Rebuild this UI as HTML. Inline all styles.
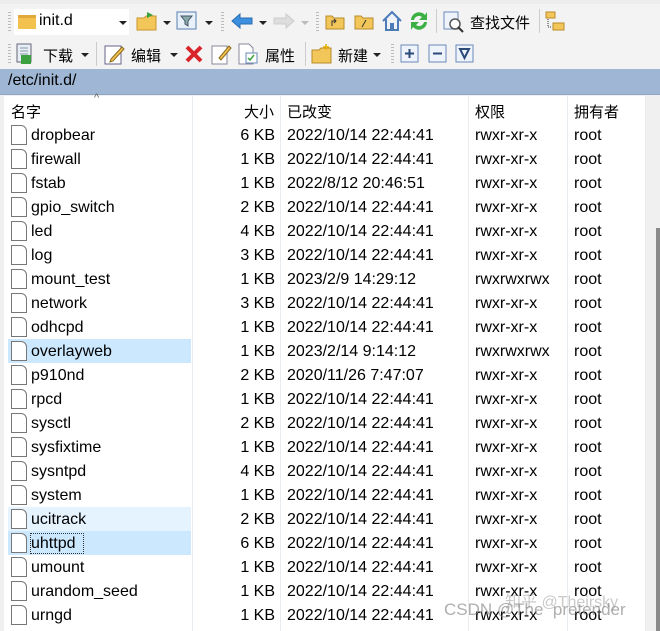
<!DOCTYPE html>
<html><head><meta charset="utf-8"><style>
*{margin:0;padding:0;box-sizing:border-box}
body{width:660px;height:631px;overflow:hidden;background:#f0f0f0;font-family:"Liberation Sans","Noto Sans CJK SC",sans-serif;font-size:15px;color:#000;position:relative}
.a{position:absolute}
.tb{position:absolute;left:0;width:660px;background:#f5f5f5}
.grip{position:absolute;width:3px;height:20px;background:repeating-linear-gradient(#bbb 0 1px,transparent 1px 3px)}
.sep{position:absolute;width:1px;height:24px;background:#ccc}
.dd{position:absolute;width:0;height:0;border-left:4px solid transparent;border-right:4px solid transparent;border-top:4px solid #222}
.t{position:absolute;font-size:15px;white-space:nowrap}
.row{position:absolute;left:0;height:24px;width:646px;font-size:16px}
.row span{position:absolute;top:4px;line-height:18px;white-space:nowrap}
.fi{position:absolute;left:11px;top:2px;width:16px;height:20px;border:1px solid #777;background:#fff;border-top-right-radius:6px}
</style></head><body>
<!-- toolbar 1 -->
<div class="tb" style="top:0;height:38px;background:#f3f3f3;border-top:4px solid #ededed"></div>
<div class="grip" style="left:8px;top:12px"></div>
<div class="a" style="left:14px;top:9px;width:115px;height:26px;background:#fff"></div>
<div class="a" style="left:18px;top:15px;width:18px;height:14px;background:#f2c14e;border-top:3px solid #e0a93a"></div>
<div class="t" style="left:39px;top:12px;font-size:16px">init.d</div>
<div class="dd" style="left:119px;top:21px"></div>
<svg class="a" style="left:135px;top:10px" width="24" height="22"><path d="M2 8h7l2-2h10v14H2z" fill="#f3c65a" stroke="#c9962f"/><path d="M12 2l6 3-6 3z" fill="#3aa040"/></svg>
<div class="dd" style="left:163px;top:21px"></div>
<svg class="a" style="left:176px;top:11px" width="22" height="20"><rect x="1" y="1" width="19" height="17" fill="#e8f0fa" stroke="#5a7fb0"/><path d="M5 5h11l-4 5v5l-3-2v-3z" fill="#8aa" stroke="#456"/></svg>
<div class="dd" style="left:205px;top:21px"></div>
<div class="grip" style="left:221px;top:12px"></div>
<svg class="a" style="left:231px;top:13px" width="22" height="16"><path d="M1 8l8-7v4h12v6H9v4z" fill="#3d8fe0" stroke="#2a6cb0"/></svg>
<div class="dd" style="left:259px;top:21px"></div>
<svg class="a" style="left:273px;top:13px" width="22" height="16"><path d="M21 8l-8-7v4H1v6h12v4z" fill="#ddd" stroke="#ccc"/></svg>
<div class="dd" style="left:301px;top:21px;border-top-color:#bbb"></div>
<div class="grip" style="left:316px;top:12px"></div>
<svg class="a" style="left:325px;top:12px" width="20" height="18"><path d="M1 4h6l2 2h10v11H1z" fill="#f3c65a" stroke="#b98b2a"/><path d="M7 14v-5h4M9 7l2 2-2 2" stroke="#333" fill="none"/></svg>
<svg class="a" style="left:354px;top:12px" width="20" height="18"><path d="M1 4h6l2 2h10v11H1z" fill="#f3c65a" stroke="#b98b2a"/><path d="M8 15l4-7" stroke="#333"/></svg>
<svg class="a" style="left:381px;top:10px" width="22" height="22"><path d="M2 11L11 2l9 9M5 9v11h12V9" fill="#eef3fb" stroke="#4c7bb8" stroke-width="2"/><rect x="9" y="13" width="4" height="7" fill="#4c7bb8"/></svg>
<svg class="a" style="left:407px;top:9px" width="24" height="24"><path d="M4 11a8 8 0 0 1 14-5l2-3v8h-8l3-3a5 5 0 0 0-8 3z" fill="#3cb043"/><path d="M20 13a8 8 0 0 1-14 5l-2 3v-8h8l-3 3a5 5 0 0 0 8-3z" fill="#3cb043"/></svg>
<div class="sep" style="left:436px;top:9px"></div>
<svg class="a" style="left:443px;top:11px" width="22" height="22"><rect x="1" y="1" width="14" height="17" fill="#eef3fb" stroke="#6a8ab8"/><circle cx="12" cy="13" r="5" fill="#fff" stroke="#555" stroke-width="1.5"/><path d="M15 16l5 5" stroke="#333" stroke-width="2"/></svg>
<div class="t" style="left:470px;top:12px">查找文件</div>
<div class="sep" style="left:539px;top:9px"></div>
<svg class="a" style="left:545px;top:11px" width="22" height="22"><rect x="1" y="1" width="9" height="6" fill="#f3c65a" stroke="#b98b2a"/><rect x="8" y="12" width="11" height="7" fill="#f3c65a" stroke="#b98b2a"/><path d="M3 8v8h4" stroke="#333" stroke-dasharray="1 1" fill="none"/></svg>
<!-- toolbar 2 -->
<div class="tb" style="top:38px;height:32px;background:#f3f3f3"></div>
<div class="grip" style="left:8px;top:44px"></div>
<svg class="a" style="left:15px;top:42px" width="22" height="24"><rect x="2" y="2" width="14" height="18" fill="#e8eef6" stroke="#667"/><path d="M5 6h8M5 9h8M5 12h8" stroke="#89a"/><rect x="6" y="13" width="10" height="9" fill="#3aa040"/></svg>
<div class="t" style="left:43px;top:45px">下载</div>
<div class="dd" style="left:81px;top:53px"></div>
<div class="sep" style="left:96px;top:42px"></div>
<svg class="a" style="left:104px;top:43px" width="22" height="22"><rect x="1" y="3" width="16" height="18" fill="#fff" stroke="#668"/><path d="M7 16l11-12 2 2L9 18l-3 1z" fill="#f2c14e" stroke="#8a6a20"/></svg>
<div class="t" style="left:131px;top:45px">编辑</div>
<div class="dd" style="left:170px;top:53px"></div>
<svg class="a" style="left:184px;top:44px" width="20" height="20"><path d="M3 3l14 14M17 3L3 17" stroke="#d9242a" stroke-width="4"/></svg>
<svg class="a" style="left:211px;top:43px" width="22" height="22"><rect x="1" y="3" width="15" height="18" fill="#fff" stroke="#889"/><path d="M8 15l10-12 2 2L10 17z" fill="#f2c14e" stroke="#8a6a20"/></svg>
<svg class="a" style="left:238px;top:43px" width="22" height="22"><path d="M1 1h10l4 4v16H1z" fill="#fff" stroke="#889"/><rect x="8" y="10" width="11" height="10" fill="#fff" stroke="#6a8ab8"/><path d="M10 15l2 2 4-5" stroke="#3aa040" stroke-width="1.5" fill="none"/></svg>
<div class="t" style="left:265px;top:45px">属性</div>
<div class="sep" style="left:305px;top:42px"></div>
<svg class="a" style="left:311px;top:43px" width="22" height="22"><path d="M1 7h7l2-2h10v15H1z" fill="#f3c65a" stroke="#b98b2a"/><path d="M15 1v6M12 4h6" stroke="#e8b000" stroke-width="1.5"/></svg>
<div class="t" style="left:338px;top:45px">新建</div>
<div class="dd" style="left:373px;top:53px"></div>
<div class="grip" style="left:391px;top:44px"></div>
<svg class="a" style="left:400px;top:44px" width="20" height="20"><rect x="1" y="1" width="17" height="17" fill="#eef3fb" stroke="#6a8ab8"/><path d="M9.5 5v9M5 9.5h9" stroke="#2a4a7a" stroke-width="2"/></svg>
<svg class="a" style="left:428px;top:44px" width="20" height="20"><rect x="1" y="1" width="17" height="17" fill="#eef3fb" stroke="#6a8ab8"/><path d="M5 9.5h9" stroke="#2a4a7a" stroke-width="2"/></svg>
<svg class="a" style="left:455px;top:44px" width="20" height="20"><rect x="1" y="1" width="17" height="17" fill="#eef3fb" stroke="#6a8ab8"/><path d="M5 5h9l-4.5 9z" fill="none" stroke="#2a4a7a" stroke-width="2"/></svg>
<!-- path bar -->
<div class="a" style="left:0;top:69px;width:660px;height:26px;background:#9fb7d5;border-bottom:1px solid #8ea6c4"></div>
<div class="t" style="left:8px;top:72px;font-size:16px">/etc/init.d/</div>
<!-- list -->
<div class="a" style="left:4px;top:96px;width:642px;height:535px;background:#fff"></div>
<div class="a" style="left:646px;top:96px;width:14px;height:535px;background:#f0f0f0"></div>
<div class="a" style="left:656px;top:228px;width:4px;height:403px;background:#8a8a8a"></div>
<div class="a" style="left:192px;top:96px;width:1px;height:535px;background:#e8edf2"></div>
<div class="a" style="left:280px;top:96px;width:1px;height:535px;background:#e8edf2"></div>
<div class="a" style="left:468px;top:96px;width:1px;height:535px;background:#e8edf2"></div>
<div class="a" style="left:567px;top:96px;width:1px;height:535px;background:#e8edf2"></div>
<div class="a" style="left:645px;top:96px;width:1px;height:535px;background:#e8edf2"></div>
<div class="t" style="left:94px;top:92px;font-size:11px;color:#666">^</div>
<div class="t" style="left:11px;top:101px">名字</div>
<div class="t" style="left:244px;top:101px">大小</div>
<div class="t" style="left:287px;top:101px">已改变</div>
<div class="t" style="left:475px;top:101px">权限</div>
<div class="t" style="left:574px;top:101px">拥有者</div>
<div class="a" style="left:8px;top:339px;width:183px;height:24px;background:#cce8ff"></div>
<div class="a" style="left:8px;top:507px;width:183px;height:24px;background:#e5f3ff"></div>
<div class="a" style="left:8px;top:531px;width:183px;height:24px;background:#cce8ff"></div>
<div class="a" style="left:30px;top:533px;width:54px;height:21px;border:1px dotted #333"></div>
<div id="rows"></div>
<script>
var d=[["dropbear","6","2022/10/14 22:44:41",0],["firewall","1","2022/10/14 22:44:41",0],["fstab","1","2022/8/12 20:46:51",0],["gpio_switch","2","2022/10/14 22:44:41",0],["led","4","2022/10/14 22:44:41",0],["log","3","2022/10/14 22:44:41",0],["mount_test","1","2023/2/9 14:29:12",1],["network","3","2022/10/14 22:44:41",0],["odhcpd","1","2022/10/14 22:44:41",0],["overlayweb","1","2023/2/14 9:14:12",1],["p910nd","2","2020/11/26 7:47:07",0],["rpcd","1","2022/10/14 22:44:41",0],["sysctl","2","2022/10/14 22:44:41",0],["sysfixtime","1","2022/10/14 22:44:41",0],["sysntpd","4","2022/10/14 22:44:41",0],["system","1","2022/10/14 22:44:41",0],["ucitrack","2","2022/10/14 22:44:41",0],["uhttpd","6","2022/10/14 22:44:41",0],["umount","1","2022/10/14 22:44:41",0],["urandom_seed","1","2022/10/14 22:44:41",0],["urngd","1","2022/10/14 22:44:41",0]];
var h="";d.forEach(function(r,i){var y=123+i*24;h+='<div class="row" style="top:'+y+'px;z-index:2"><div class="fi"></div><span style="left:31px">'+r[0]+'</span><span style="right:371px">'+r[1]+' KB</span><span style="left:287px">'+r[2]+'</span><span style="left:475px">'+(r[3]?'rwxrwxrwx':'rwxr-xr-x')+'</span><span style="left:574px">root</span></div>';});
document.getElementById('rows').innerHTML=h;
</script>
<div class="t" style="left:505px;top:588px;color:rgba(150,150,150,.5);font-size:16px;z-index:3">知乎 @Theirsky</div>
<div class="t" style="left:444px;top:600px;color:rgba(120,120,120,.6);font-size:17px;z-index:3">CSDN @The&nbsp; pretender</div>
</body></html>
